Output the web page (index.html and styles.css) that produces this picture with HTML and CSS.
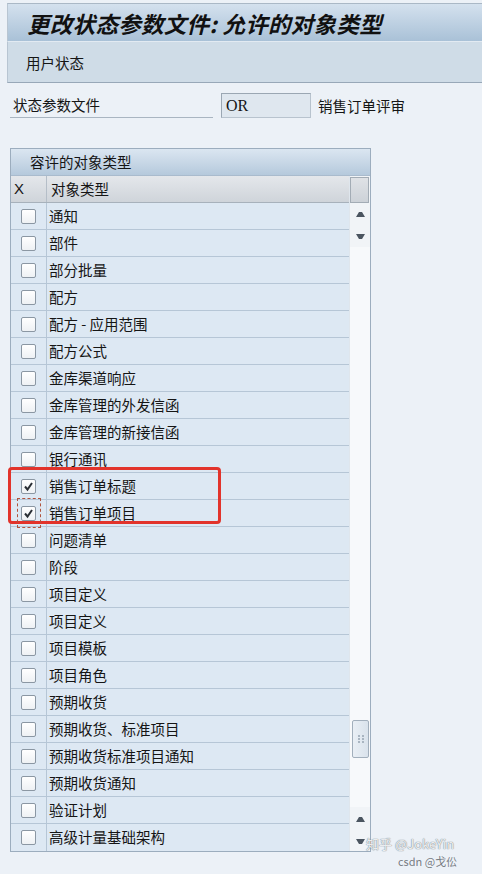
FILE: index.html
```html
<!DOCTYPE html>
<html lang="zh-CN">
<head>
    <meta charset="UTF-8">
    <title>更改状态参数文件</title>
    <link rel="stylesheet" href="styles.css">
</head>
<body>
<div class="title-bar">
    <h1>更改状态参数文件: 允许的对象类型</h1>
</div>
<div class="tool-bar">
    <span>用户状态</span>
</div>

<div class="content">
    <div class="field-row">
        <div class="field-label">状态参数文件</div>
        <div class="field-input">OR</div>
        <div class="field-desc">销售订单评审</div>
    </div>

    <div class="table-frame">
        <div class="table-title">容许的对象类型</div>
        <div class="table-grid">
            <div class="table-main">
                <div class="head-row">
                    <div class="cell-x">X</div>
                    <div class="cell-text">对象类型</div>
                </div>
                <div class="rows" id="obj-rows">
                    <div class="red-mark"></div>
                    <div class="focus-mark"></div>
                </div>
            </div>
            <div class="scrollbar">
                <div class="scroll-head"><div class="scroll-head-box"></div></div>
                <div class="scroll-btn up"><svg width="9" height="5" viewBox="0 0 9 5"><polygon points="0,5 9,5 6,0 3,0" fill="#4b5560"/></svg></div>
                <div class="scroll-btn down"><svg width="9" height="5" viewBox="0 0 9 5"><polygon points="0,0 9,0 6,5 3,5" fill="#4b5560"/></svg></div>
                <div class="scroll-track">
                    <div class="scroll-thumb">
                        <svg width="6" height="8" viewBox="0 0 6 8">
                            <rect x="0" y="0" width="2" height="2" fill="#a9b5c1"/>
                            <rect x="4" y="0" width="2" height="2" fill="#a9b5c1"/>
                            <rect x="0" y="3" width="2" height="2" fill="#a9b5c1"/>
                            <rect x="4" y="3" width="2" height="2" fill="#a9b5c1"/>
                            <rect x="0" y="6" width="2" height="2" fill="#a9b5c1"/>
                            <rect x="4" y="6" width="2" height="2" fill="#a9b5c1"/>
                        </svg>
                    </div>
                </div>
                <div class="scroll-btn up low"><svg width="9" height="5" viewBox="0 0 9 5"><polygon points="0,5 9,5 6,0 3,0" fill="#4b5560"/></svg></div>
                <div class="scroll-btn down last"><svg width="9" height="5" viewBox="0 0 9 5"><polygon points="0,0 9,0 6,5 3,5" fill="#4b5560"/></svg></div>
            </div>
        </div>
    </div>
</div>

<div class="watermark">
    <span class="wm-zhihu">知乎 @JokeYin</span>
    <span class="wm-csdn">csdn @戈伀</span>
</div>

<script>
    let object_types = [
        "通知", "部件", "部分批量", "配方", "配方 - 应用范围", "配方公式",
        "金库渠道响应", "金库管理的外发信函", "金库管理的新接信函", "银行通讯",
        "销售订单标题", "销售订单项目", "问题清单", "阶段", "项目定义", "项目定义",
        "项目模板", "项目角色", "预期收货", "预期收货、标准项目", "预期收货标准项目通知",
        "预期收货通知", "验证计划", "高级计量基础架构"
    ];
    let checked = ["销售订单标题", "销售订单项目"];
    let rows_box = document.getElementById('obj-rows');
    for (let i = 0; i < object_types.length; i++) {
        let row = document.createElement("DIV");
        row.classList.add("row");
        let check_cell = document.createElement("DIV");
        check_cell.classList.add("cell-check");
        let box = document.createElement("SPAN");
        box.classList.add("check");
        if (checked.indexOf(object_types[i]) >= 0) {
            box.innerHTML = '<svg width="11" height="11" viewBox="0 0 11 11"><path d="M2 5.5 L4.5 8.5 L9 2" fill="none" stroke="#2a2f35" stroke-width="2"/></svg>';
        }
        check_cell.appendChild(box);
        let text_cell = document.createElement("DIV");
        text_cell.classList.add("cell-text");
        text_cell.innerText = object_types[i];
        row.appendChild(check_cell);
        row.appendChild(text_cell);
        rows_box.appendChild(row);
    }
</script>
</body>
</html>
```

FILE: styles.css
```css
body {
    margin: 0;
    background: #ecf1f7;
    font-family: "Noto Sans CJK SC", "Liberation Sans", sans-serif;
    font-size: 14.5px;
    color: #151515;
    position: relative;
    height: 874px;
    overflow: hidden;
}
.title-bar {
    margin: 3px 0 0 7px;
    height: 37px;
    border-top: 1px solid #aab8c6;
    border-left: 1px solid #b8c5d2;
    background: linear-gradient(#d4e1ee, #a9c1d7);
    display: flex;
    align-items: center;
    padding-left: 19px;
}
.title-bar h1 {
    margin: 0;
    font-size: 22.5px;
    font-weight: bold;
    font-style: italic;
    color: #111;
    letter-spacing: 0.3px;
}
.tool-bar {
    margin-left: 7px;
    height: 40px;
    border-top: 1px solid #e2eaf2;
    border-left: 1px solid #b8c5d2;
    border-bottom: 1px solid #98a8b8;
    background: #cfdce7;
    padding-left: 18px;
    display: flex;
    align-items: center;
}
.content {
    padding-top: 10px;
}
.field-row {
    display: flex;
    height: 25px;
    margin-left: 10px;
}
.field-label {
    width: 200px;
    padding-left: 3px;
    border-bottom: 1px solid #a9b5c1;
    line-height: 24px;
}
.field-input {
    margin-left: 8px;
    width: 84px;
    padding-left: 4px;
    border: 1px solid #b8c3ce;
    border-top-color: #9ba7b3;
    border-left-color: #9ba7b3;
    background: #dfe7ef;
    font-family: "Liberation Serif", serif;
    font-size: 16px;
    line-height: 23px;
}
.field-desc {
    margin-left: 7px;
    line-height: 25px;
}
.table-frame {
    margin: 30px 0 0 10px;
    width: 359px;
    border: 1px solid #9cadbe;
}
.table-title {
    height: 26px;
    line-height: 26px;
    padding-left: 19px;
    border-bottom: 1px solid #a9bbcd;
    background: linear-gradient(#dbe6f1, #b5c9dc);
}
.table-grid {
    display: grid;
    grid-template-columns: 1fr 21px;
}
.head-row {
    display: flex;
    height: 26px;
    line-height: 26px;
    border-bottom: 1px solid #a7b1bb;
    background: linear-gradient(#e4e7eb, #cfd4da);
}
.cell-x {
    width: 32px;
    padding-left: 3px;
    border-right: 1px solid #b5bec8;
    font-family: "Liberation Sans", sans-serif;
    font-size: 15px;
}
.head-row .cell-text {
    padding-left: 4px;
}
.rows {
    position: relative;
}
.row {
    display: flex;
    height: 26px;
    border-bottom: 1px solid #b6c6d6;
    background: #dde8f3;
}
.row:last-child {
    border-bottom: none;
    height: 27px;
}
.cell-check {
    width: 35px;
    border-right: 1px solid #b6c6d6;
    display: flex;
    align-items: center;
    justify-content: center;
}
.row .cell-text {
    padding-left: 2px;
    line-height: 26px;
}
.check {
    width: 13px;
    height: 13px;
    border: 1px solid #8b97a3;
    border-radius: 2px;
    background: linear-gradient(#ffffff, #eef1f4);
    display: flex;
    align-items: center;
    justify-content: center;
}
.red-mark {
    position: absolute;
    left: -3px;
    top: 264px;
    width: 207px;
    height: 51px;
    border: 3px solid #e2332b;
    border-radius: 4px;
}
.focus-mark {
    position: absolute;
    left: 6px;
    top: 295px;
    width: 22px;
    height: 28px;
    border: 1px dashed #b0533d;
}
.scrollbar {
    display: flex;
    flex-direction: column;
    background: #f1f4f7;
    border-left: 1px solid #dfe6ed;
}
.scroll-head {
    height: 27px;
    padding: 1px 1px 0 0;
    box-sizing: border-box;
}
.scroll-head-box {
    height: 24px;
    border: 1px solid #a3acb5;
    background: linear-gradient(#dfe2e6, #cdd2d8);
}
.scroll-btn {
    height: 22px;
    display: flex;
    align-items: center;
    justify-content: center;
}
.scroll-btn.low {
    height: 24px;
}
.scroll-btn.last {
    height: 20px;
}
.scroll-track {
    flex: 1;
    background: #f7f9fb;
}
.scroll-thumb {
    margin: 473px 1px 0 2px;
    height: 36px;
    border: 1px solid #a2afbc;
    border-radius: 2px;
    background: linear-gradient(90deg, #e9eff5, #dae3ec);
    display: flex;
    align-items: center;
    justify-content: center;
}
.watermark {
    position: absolute;
    left: 366px;
    top: 836px;
    width: 116px;
    height: 36px;
    display: flex;
    flex-direction: column;
    align-items: flex-start;
}
.wm-zhihu {
    font-size: 13px;
    line-height: 15px;
    color: rgba(250, 251, 252, 0.9);
    text-shadow: 0 0 1px #7f878f, 0 0 1px #7f878f;
    white-space: nowrap;
}
.wm-csdn {
    margin: 4px 0 0 32px;
    font-size: 11px;
    line-height: 13px;
    color: rgba(105, 110, 115, 0.9);
    white-space: nowrap;
}
```
